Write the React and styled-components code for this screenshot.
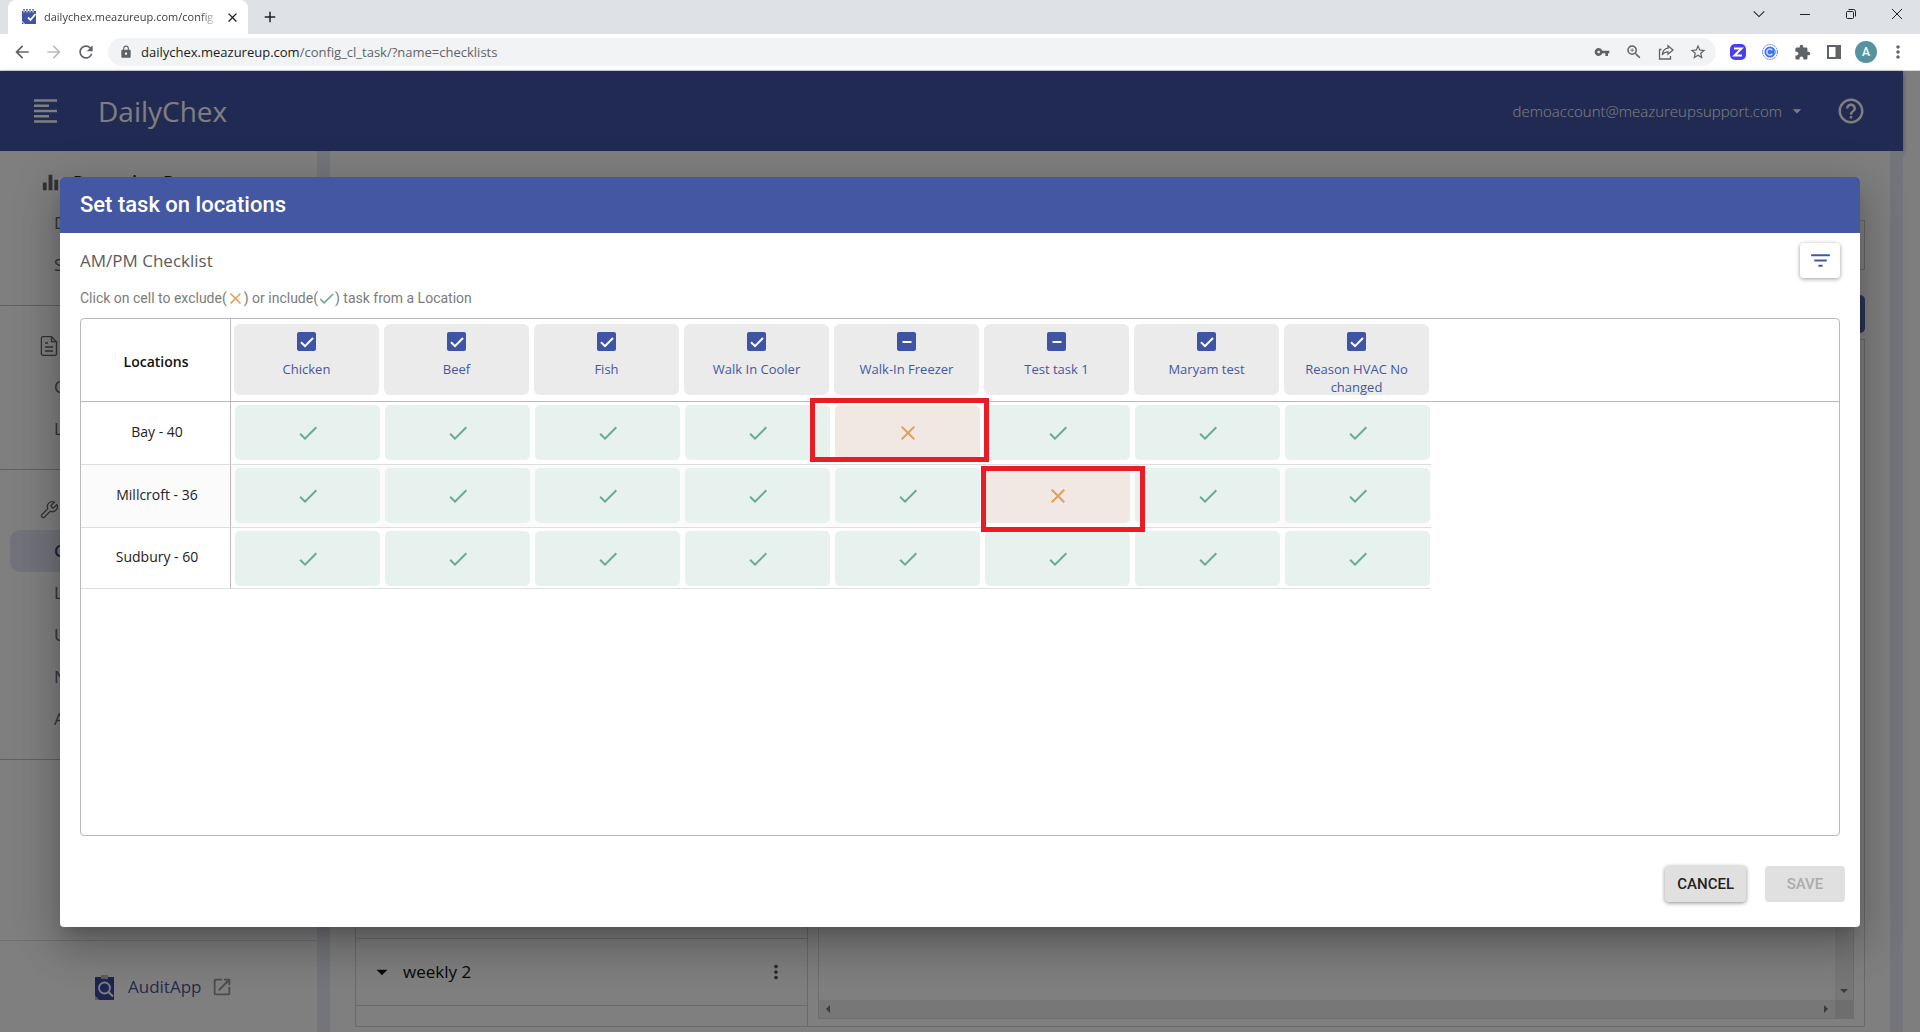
import React, { useEffect, useRef, useState } from "react";
import styled, { createGlobalStyle, css } from "styled-components";
import {
  MdAdd,
  MdArrowBack,
  MdArrowDropDown,
  MdArrowForward,
  MdCheck,
  MdClose,
  MdEqualizer,
  MdExtension,
  MdFilterList,
  MdHelpOutline,
  MdLock,
  MdMoreVert,
  MdOpenInNew,
  MdRefresh,
  MdStarBorder,
  MdVpnKey,
  MdZoomIn,
} from "react-icons/md";

const ui = '"Open Sans", "Noto Sans", sans-serif';
const roboto = 'Roboto, "Liberation Sans", sans-serif';
const indigo = "#4457a3";

const GlobalStyle = createGlobalStyle`
  *, *::before, *::after { box-sizing: border-box; }
  body { margin: 0; font-family: ${ui}; color: #202124; }
  button { font: inherit; color: inherit; border: 0; padding: 0; background: none; cursor: pointer; }
  svg { display: block; flex: none; }
`;

const Window = styled.div`
  display: flex;
  flex-direction: column;
  height: 100vh;
  overflow: hidden;
`;

/* ---------- browser frame ---------- */

const TabStrip = styled.header`
  display: flex;
  height: 34px;
  padding-left: 8px;
  background: #dee1e6;
`;

const Tab = styled.div`
  display: flex;
  align-items: center;
  gap: 7px;
  width: 240px;
  padding: 0 8px 0 13px;
  background: #fff;
  border-radius: 8px 8px 0 0;
  font-size: 11px;
  line-height: 16px;
`;

const TabTitle = styled.span`
  flex: 1;
  overflow: hidden;
  white-space: nowrap;
  color: #3c4043;
  mask-image: linear-gradient(90deg, #000 90%, transparent);
`;

const StripButton = styled.button`
  display: grid;
  place-items: center;
  width: ${(p) => p.$width}px;
  color: #202124;
`;

const WindowControls = styled.div`
  display: flex;
  margin-left: auto;
  height: 28px;
`;

const Toolbar = styled.div`
  display: flex;
  align-items: center;
  height: 37px;
  padding: 0 6px;
  background: #fff;
  border-bottom: 1px solid #d5d8dc;
`;

const ToolButton = styled.button`
  display: grid;
  place-items: center;
  width: 32px;
  height: 28px;
  color: ${(p) => (p.$faded ? "#babcbe" : "#5f6368")};
`;

const Omnibox = styled.div`
  flex: 1;
  display: flex;
  align-items: center;
  gap: 8px;
  height: 28px;
  margin: 0 6px;
  padding: 0 2px 0 11px;
  border-radius: 14px;
  background: #f1f3f4;
  color: #5f6368;
  font-size: 13px;
  line-height: 18px;
`;

const Address = styled.span`
  flex: 1;
  b { font-weight: 400; color: #202124; }
`;

const PageActions = styled.div`
  display: flex;
`;

const Avatar = styled.span`
  display: grid;
  place-items: center;
  width: 22px;
  height: 22px;
  border-radius: 50%;
  background: #5593a0;
  color: #fff;
  font: 500 12px/16px ${roboto};
`;

/* ---------- application behind the dialog ---------- */

const AppArea = styled.div`
  position: relative;
  flex: 1;
  min-height: 0;
  display: flex;
  flex-direction: column;
  padding-right: 17px;
  background: #fcfcfc;
`;

const AppBar = styled.header`
  display: flex;
  align-items: center;
  flex: none;
  height: 80px;
  padding: 0 37px 0 33px;
  background: #4055a6;
  color: #fff;
  box-shadow: 0 2px 5px rgba(0, 0, 0, 0.4);
`;

const Brand = styled.span`
  margin-left: 41px;
  font-size: 28px;
  line-height: 40px;
`;

const Account = styled.button`
  display: flex;
  align-items: center;
  gap: 5px;
  margin: 0 29px 0 auto;
  font-size: 15px;
  font-weight: 300;
  line-height: 24px;
`;

const Columns = styled.div`
  flex: 1;
  min-height: 0;
  display: flex;
  gap: 13px;
  padding-right: 13px;
  background: #e9eaf5;
`;

const Sidebar = styled.nav`
  display: flex;
  flex-direction: column;
  flex: none;
  width: 317px;
  background: #fff;
`;

const NavGroup = styled.section`
  padding: ${(p) => (p.$first ? 11 : 20)}px 0 19px;
  border-bottom: 1px solid #c0c0c0;
`;

const NavTitle = styled.div`
  display: flex;
  align-items: center;
  gap: 11px;
  height: 40px;
  padding-left: 39px;
  font-size: 18px;
  line-height: 24px;
  font-weight: 600;
  color: #222;
  svg { color: #666; }
`;

const NavLink = styled.a`
  display: flex;
  align-items: center;
  height: 42px;
  margin: 0 10px;
  padding-left: 44px;
  border-radius: 10px;
  font-size: 17px;
  line-height: 24px;
  text-decoration: none;
  color: #666;
  ${(p) => p.$active && css`background: #e4e6f4; color: #3f3a90; font-weight: 600;`}
`;

const SidebarFoot = styled.a`
  display: flex;
  align-items: center;
  height: 92px;
  margin-top: auto;
  padding-left: 95px;
  border-top: 1px solid #dcddea;
  font-size: 17px;
  line-height: 24px;
  text-decoration: none;
  color: #4c5896;
  svg:last-child { color: #999; margin-left: 10px; }
  span { margin-left: 14px; }
`;

const Main = styled.main`
  flex: 1;
  min-width: 0;
  display: flex;
  flex-direction: column;
  padding: 69px 25px 5px;
  background: #fff;
`;

const SearchBox = styled.div`
  flex: none;
  height: 50px;
  border: 1px solid #ccc;
`;

const AddButton = styled.button`
  flex: none;
  align-self: flex-end;
  width: 120px;
  height: 38px;
  margin: 25px 0 6px;
  border-radius: 5px;
  background: #5567b0;
`;

const Board = styled.div`
  flex: 1;
  min-height: 0;
  display: flex;
  gap: 10px;
  padding: 0 10px 0 0;
  border: 1px solid #d4d4d4;
`;

const Checklists = styled.div`
  display: flex;
  flex-direction: column;
  justify-content: flex-end;
  width: 452px;
  border-right: 1px solid #d4d4d4;
`;

const ListRow = styled.div`
  display: flex;
  align-items: center;
  height: ${(p) => (p.$stub ? 21 : 67)}px;
  padding: 0 20px 0 13px;
  border-top: 1px solid #d4d4d4;
  font-size: 17px;
  font-weight: 500;
  line-height: 24px;
  color: #111;
  span { flex: 1; margin-left: 8px; }
  button { color: #555; }
`;

const Preview = styled.div`
  flex: 1;
  display: grid;
  grid-template: 1fr 18px / 1fr 18px;
  margin-bottom: 7px;
  border: solid #dcdcdc;
  border-width: 0 1px 1px;
`;

const Track = styled.div`
  display: flex;
  flex-direction: ${(p) => (p.$vertical ? "column" : "row")};
  justify-content: ${(p) => (p.$vertical ? "flex-end" : "space-between")};
  align-items: center;
  padding: 5px;
  background: #efefef;
  color: #777;
`;

const Corner = styled.div`
  background: #dcdcdc;
`;

/* ---------- dialog ---------- */

const Scrim = styled.div`
  position: absolute;
  inset: 0;
  display: flex;
  padding: 106px 60px 105px;
  background: rgba(0, 0, 0, 0.5);
`;

const Dialog = styled.div`
  flex: 1;
  min-width: 0;
  display: flex;
  flex-direction: column;
  border-radius: 4px;
  overflow: hidden;
  background: #fff;
  box-shadow: 0 11px 15px -7px rgba(0, 0, 0, 0.2), 0 24px 38px 3px rgba(0, 0, 0, 0.14),
    0 9px 46px 8px rgba(0, 0, 0, 0.12);
`;

const DialogTitle = styled.h2`
  margin: 0;
  padding: 12px 20px;
  background: ${indigo};
  color: #fff;
  font: 500 22px/32px ${roboto};
`;

const DialogBody = styled.div`
  flex: 1;
  min-height: 0;
  display: flex;
  flex-direction: column;
  padding: 10px 20px 0;
`;

const SubHeader = styled.div`
  display: flex;
  align-items: center;
  justify-content: space-between;
`;

const ListName = styled.h3`
  margin: 0;
  font-size: 17px;
  font-weight: 400;
  line-height: 24px;
  color: #5c5c5c;
`;

const FilterButton = styled.button`
  display: grid;
  place-items: center;
  width: 40px;
  height: 35px;
  border-radius: 4px;
  color: ${indigo};
  box-shadow: 0 1px 4px rgba(0, 0, 0, 0.4);
`;

const Mark = styled.span`
  display: grid;
  place-items: center;
  color: ${(p) => (p.$excluded ? "#dfa062" : "#6aaa93")};
`;

const Hint = styled.p`
  display: flex;
  align-items: center;
  margin: 0;
  font: 400 14px/40px ${roboto};
  color: #7c7c7c;
  white-space: pre;
  ${Mark} { margin: 0 -1px; }
`;

const Frame = styled.div`
  flex: 1;
  min-height: 0;
  overflow: auto;
  border: 1px solid #b9b9bb;
  border-radius: 4px;
`;

const Grid = styled.table`
  width: 100%;
  table-layout: fixed;
  border-spacing: 0;
`;

const TaskCol = styled.col`
  width: 150px;
`;

const HeadCell = styled.th`
  padding: 5px 2px 6px 3px;
  border-bottom: 1px solid #b9b9bb;
  font-weight: 400;
`;

const CornerCell = styled(HeadCell)`
  padding-top: 10px;
  border-right: 1px solid #b9b9bb;
  font-size: 14px;
  font-weight: 600;
  line-height: 20px;
  color: #111;
`;

const TaskChip = styled.label`
  display: flex;
  flex-direction: column;
  align-items: center;
  gap: 9px;
  height: 71px;
  padding: 8px 8px 0;
  border-radius: 6px;
  background: #ebebeb;
  color: ${indigo};
  font-size: 13px;
  line-height: 18px;
`;

const BoxWrap = styled.span`
  display: grid;
  place-items: center;
  color: #fff;
  > * { grid-area: 1 / 1; }
  svg { pointer-events: none; z-index: 1; }
`;

const Box = styled.input`
  appearance: none;
  width: 19px;
  height: 19px;
  margin: 0;
  border-radius: 2px;
  background: #3f54a5;
`;

const Row = styled.tr`
  &:nth-child(even) > * { background: #fbfbfc; }
  &:last-child > td { padding-bottom: 2px; }
`;

const LocationCell = styled.th`
  padding: 0 0 3px 3px;
  border-right: 1px solid #b9b9bb;
  border-bottom: 1px solid #dcdfe2;
  font-size: 14px;
  font-weight: 400;
  line-height: 20px;
  color: #222;
`;

const StateCell = styled.td`
  position: relative;
  padding: 3px 1px 4px 4px;
  border-bottom: 1px solid #dcdfe2;
`;

const StateButton = styled.button`
  display: grid;
  place-items: center;
  width: 100%;
  height: 55px;
  border-radius: 5px;
  background: ${(p) => (p.$excluded ? "#f2e8e3" : "#e7f2ee")};
`;

const callouts = {
  first: css`left: -21px; top: -4px; width: 179px; height: 64px;`,
  second: css`left: 0; top: 1px; width: 164px; height: 66px;`,
};

const Callout = styled.span`
  position: absolute;
  z-index: 2;
  border: 5px solid #e81c24;
  pointer-events: none;
  ${(p) => callouts[p.$place]}
`;

const Footer = styled.div`
  display: flex;
  justify-content: flex-end;
  gap: 19px;
  padding: 30px 15px 25px;
`;

const Action = styled.button`
  min-width: 80px;
  height: 36px;
  padding: 0 12px;
  border-radius: 4px;
  background: #e0e0e0;
  color: #222;
  font: 500 15px/20px ${roboto};
  box-shadow: 0 1px 4px rgba(0, 0, 0, 0.45);
  &:disabled { color: #acacac; box-shadow: none; }
`;

/* ---------- drawings ---------- */

const Favicon = () => (
  <svg width="16" height="16" viewBox="0 0 16 16">
    <path d="M1 2h14v13H4l-3-3z" fill="#4055a8" />
    <path d="M3 0v3M6 0v3M9 0v3M12 0v3" stroke="#4055a8" strokeWidth="2" />
    <path d="M3 0.500v3M6 0.500v3M9 0.500v3M12 0.500v3" stroke="#fff" strokeWidth="1" />
    <path d="M7 8.500l2.500 2.500L14.500 5" fill="none" stroke="#fff" strokeWidth="1.800" />
    <path d="M1 13l2 2H1z" fill="#4055a8" />
  </svg>
);

const AuditIcon = () => (
  <svg width="19" height="26" viewBox="0 0 19 26">
    <path d="M0 3h19v23H4l-4-4z" fill="#3c4ba0" />
    <path d="M6 1h7v4H6z" fill="#bbb" />
    <circle cx="9.500" cy="14" r="5.500" fill="none" stroke="#fff" strokeWidth="1.800" />
    <path d="M13.500 18l4.500 4.500" stroke="#fff" strokeWidth="2" />
    <path d="M0 22l4 4H0z" fill="#bbb" />
  </svg>
);

const Line = ({ size = 16, d, width = 1.2, box = 16 }) => (
  <svg width={size} height={size} viewBox={`0 0 ${box} ${box}`} fill="none" stroke="currentColor" strokeWidth={width}>
    <path d={d} />
  </svg>
);

const MenuIcon = () => <Line size={24} box={24} width={2.5} d="M1 1.500h23M1 6.800h15M1 12h23M1 17.300h15M1 22.500h23" />;

const ZIcon = () => (
  <svg width="16" height="16" viewBox="0 0 16 16">
    <rect width="16" height="16" rx="5" fill="#4a3ff0" />
    <path d="M4 4.500h7.500L4.500 11.500H12" fill="none" stroke="#fff" strokeWidth="2" />
  </svg>
);

const CIcon = () => (
  <svg width="16" height="16" viewBox="0 0 16 16" fill="none">
    <circle cx="8" cy="8" r="7.400" stroke="#5577f2" strokeWidth="1" strokeDasharray="2 .6" />
    <circle cx="8" cy="8" r="5.500" fill="#4a6af0" />
    <path d="M10.300 6.200A3 3 0 1 0 10.300 9.800" stroke="#bfe6ff" strokeWidth="1.600" />
    <path d="M13 6.500v3" stroke="#3cc5e8" strokeWidth="2" />
  </svg>
);

const SidePanelIcon = () => (
  <svg width="14" height="14" viewBox="0 0 14 14">
    <path d="M0 0h14v14H0zM2 2v10h6.500V2z" fill="currentColor" fillRule="evenodd" />
  </svg>
);

const ShareIcon = () => (
  <Line
    width={1.3}
    d="M3.500 5.500H1.500v9.500h11v-3M10 1.800l5 4.200-5 4.200V7.800C7 7.800 5.400 9 4.300 11 4.600 7.500 6.600 4.600 10 4.200z"
  />
);

const DocIcon = () => (
  <Line size={20} box={20} width={1.3} d="M4 0.700h8.500l5 5v12q0 1.600-1.600 1.600H4q-1.600 0-1.600-1.600v-15.400Q2.400.7 4 .7zM12.500.7v5h5M6 7h3M6 11h8M6 15h8" />
);

const WrenchIcon = () => (
  <Line
    size={20}
    box={24}
    width={1.5}
    d="M14.700 6.300a1 1 0 0 0 0 1.400l1.600 1.600a1 1 0 0 0 1.400 0l3.770-3.770a6 6 0 0 1-7.940 7.940l-6.910 6.910a2.120 2.120 0 0 1-3-3l6.910-6.910a6 6 0 0 1 7.940-7.940l-3.760 3.760z"
  />
);

const Arrow = ({ d }) => (
  <svg width="8" height="8" viewBox="0 0 8 8">
    <path d={d} fill="currentColor" />
  </svg>
);

/* ---------- data ---------- */

const tasks = [
  "Chicken",
  "Beef",
  "Fish",
  "Walk In Cooler",
  "Walk-In Freezer",
  "Test task 1",
  "Maryam test",
  "Reason HVAC No changed",
];

const locations = ["Bay - 40", "Millcroft - 36", "Sudbury - 60"];

const calloutAt = { "0:4": "first", "1:5": "second" };

const navGroups = [
  { title: "Reporting Page", icon: <MdEqualizer size={23} />, links: ["Dashboard", "Summary"] },
  { title: "Records", icon: <DocIcon />, links: ["Completed", "Logs"] },
  {
    title: "Configure",
    icon: <WrenchIcon />,
    links: ["Checklists", "Locations", "Users", "Notifications", "Account"],
    active: "Checklists",
  },
];

function TaskToggle({ name, mixed, onToggle }) {
  const ref = useRef(null);
  useEffect(() => {
    ref.current.indeterminate = mixed;
  }, [mixed]);
  return (
    <TaskChip>
      <BoxWrap>
        <Box ref={ref} type="checkbox" checked={!mixed} onChange={onToggle} />
        <Line width={2} d={mixed ? "M3.500 8h9" : "M2 8.200l4 4L14 4"} />
      </BoxWrap>
      {name}
    </TaskChip>
  );
}

export default function App() {
  const [excluded, setExcluded] = useState({ "0:4": true, "1:5": true });
  const flip = (key) => setExcluded((s) => ({ ...s, [key]: !s[key] }));
  const isMixed = (col) => locations.some((_, row) => excluded[`${row}:${col}`]);
  const includeAll = (col) =>
    setExcluded((s) => {
      const next = { ...s };
      locations.forEach((_, row) => (next[`${row}:${col}`] = false));
      return next;
    });

  return (
    <Window>
      <GlobalStyle />
      <TabStrip>
        <Tab>
          <Favicon />
          <TabTitle>dailychex.meazureup.com/config</TabTitle>
          <button aria-label="Close tab"><MdClose size={15} /></button>
        </Tab>
        <StripButton $width={44} aria-label="New tab"><MdAdd size={18} /></StripButton>
        <WindowControls>
          <StripButton $width={46} aria-label="Search tabs"><Line size={14} d="M2 5l6 6 6-6" /></StripButton>
          <StripButton $width={46} aria-label="Minimize"><Line size={10} box={10} width={1} d="M0 5.500h10" /></StripButton>
          <StripButton $width={46} aria-label="Restore">
            <Line size={10} box={10} width={1} d="M1.500 2.500h5q1 0 1 1v5q0 1-1 1h-5q-1 0-1-1v-5q0-1 1-1M2.500.5h5q2 0 2 2v5" />
          </StripButton>
          <StripButton $width={46} aria-label="Close"><Line size={10} box={10} width={1} d="M0 0l10 10M10 0L0 10" /></StripButton>
        </WindowControls>
      </TabStrip>
      <Toolbar>
        <ToolButton aria-label="Back"><MdArrowBack size={20} /></ToolButton>
        <ToolButton $faded aria-label="Forward"><MdArrowForward size={20} /></ToolButton>
        <ToolButton aria-label="Reload"><MdRefresh size={20} /></ToolButton>
        <Omnibox>
          <MdLock size={14} />
          <Address><b>dailychex.meazureup.com</b>/config_cl_task/?name=checklists</Address>
          <PageActions>
            <ToolButton aria-label="Passwords"><MdVpnKey size={16} /></ToolButton>
            <ToolButton aria-label="Zoom"><MdZoomIn size={18} /></ToolButton>
            <ToolButton aria-label="Share"><ShareIcon /></ToolButton>
            <ToolButton aria-label="Bookmark"><MdStarBorder size={18} /></ToolButton>
          </PageActions>
        </Omnibox>
        <ToolButton aria-label="Zoom extension"><ZIcon /></ToolButton>
        <ToolButton aria-label="Calendar extension"><CIcon /></ToolButton>
        <ToolButton aria-label="Extensions"><MdExtension size={17} /></ToolButton>
        <ToolButton aria-label="Side panel"><SidePanelIcon /></ToolButton>
        <ToolButton aria-label="Profile"><Avatar>A</Avatar></ToolButton>
        <ToolButton aria-label="Browser menu"><MdMoreVert size={20} /></ToolButton>
      </Toolbar>

      <AppArea>
        <AppBar>
          <button aria-label="Menu"><MenuIcon /></button>
          <Brand>DailyChex</Brand>
          <Account>demoaccount@meazureupsupport.com<MdArrowDropDown size={20} /></Account>
          <button aria-label="Help"><MdHelpOutline size={30} /></button>
        </AppBar>
        <Columns>
          <Sidebar>
            {navGroups.map((group, i) => (
              <NavGroup key={group.title} $first={i === 0}>
                <NavTitle>{group.icon}{group.title}</NavTitle>
                {group.links.map((link) => (
                  <NavLink key={link} href="#" $active={link === group.active}>{link}</NavLink>
                ))}
              </NavGroup>
            ))}
            <SidebarFoot href="#"><AuditIcon /><span>AuditApp</span><MdOpenInNew size={22} /></SidebarFoot>
          </Sidebar>
          <Main>
            <SearchBox />
            <AddButton aria-label="Add checklist" />
            <Board>
              <Checklists>
                <ListRow>
                  <MdArrowDropDown size={26} />
                  <span>weekly 2</span>
                  <button aria-label="Checklist menu"><MdMoreVert size={22} /></button>
                </ListRow>
                <ListRow $stub />
              </Checklists>
              <Preview>
                <div />
                <Track $vertical><Arrow d="M0 2h8L4 6z" /></Track>
                <Track><Arrow d="M6 0v8L2 4z" /><Arrow d="M2 0v8l4-4z" /></Track>
                <Corner />
              </Preview>
            </Board>
          </Main>
        </Columns>

        <Scrim>
          <Dialog role="dialog" aria-modal="true" aria-labelledby="dialog-title">
            <DialogTitle id="dialog-title">Set task on locations</DialogTitle>
            <DialogBody>
              <SubHeader>
                <ListName>AM/PM Checklist</ListName>
                <FilterButton aria-label="Filter"><MdFilterList size={25} /></FilterButton>
              </SubHeader>
              <Hint>
                Click on cell to exclude(<Mark $excluded><MdClose size={19} /></Mark>{") or include("}
                <Mark><MdCheck size={19} /></Mark>{") task from a Location"}
              </Hint>
              <Frame>
                <Grid>
                  <colgroup>
                    {["Locations", ...tasks].map((name) => <TaskCol key={name} />)}
                    <col />
                  </colgroup>
                  <thead>
                    <tr>
                      <CornerCell scope="col">Locations</CornerCell>
                      {tasks.map((name, col) => (
                        <HeadCell key={name} scope="col">
                          <TaskToggle name={name} mixed={isMixed(col)} onToggle={() => includeAll(col)} />
                        </HeadCell>
                      ))}
                      <HeadCell as="td" />
                    </tr>
                  </thead>
                  <tbody>
                    {locations.map((place, row) => (
                      <Row key={place}>
                        <LocationCell scope="row">{place}</LocationCell>
                        {tasks.map((name, col) => {
                          const key = `${row}:${col}`;
                          const out = Boolean(excluded[key]);
                          return (
                            <StateCell key={key}>
                              <StateButton $excluded={out} onClick={() => flip(key)} aria-label={`${name}, ${place}`}>
                                <Mark $excluded={out}>{out ? <MdClose size={24} /> : <MdCheck size={24} />}</Mark>
                              </StateButton>
                              {calloutAt[key] && <Callout $place={calloutAt[key]} />}
                            </StateCell>
                          );
                        })}
                      </Row>
                    ))}
                  </tbody>
                </Grid>
              </Frame>
            </DialogBody>
            <Footer>
              <Action>CANCEL</Action>
              <Action disabled>SAVE</Action>
            </Footer>
          </Dialog>
        </Scrim>
      </AppArea>
    </Window>
  );
}
